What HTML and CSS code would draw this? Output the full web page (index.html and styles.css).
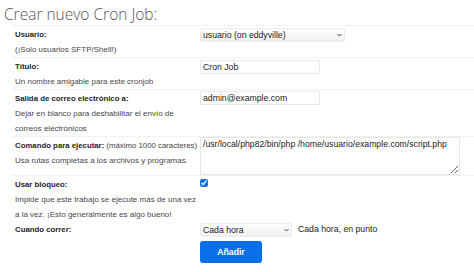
FILE: index.html
```html
<!DOCTYPE html>
<html lang="es">
<head>
<meta charset="utf-8">
<title>Crear nuevo Cron Job</title>
<link rel="stylesheet" href="styles.css">
</head>
<body>
<div class="page">
  <h1 class="title">Crear nuevo Cron Job:</h1>
  <form class="form">
    <div class="row">
      <div class="label-cell">
        <label class="lbl">Usuario:</label>
        <div class="desc">(¡Solo usuarios SFTP/Shell!)</div>
      </div>
      <div class="field">
        <span class="select-wrap select-wrap--user">
          <select class="select"><option>usuario (on eddyville)</option></select>
          <svg class="chev" viewBox="0 0 6 4" width="5" height="4"><path d="M0.6 0.8 L3 3.2 L5.4 0.8" fill="none" stroke="#333" stroke-width="1.1"/></svg>
        </span>
      </div>
    </div>
    <div class="row">
      <div class="label-cell">
        <label class="lbl">Título:</label>
        <div class="desc">Un nombre amigable para este cronjob</div>
      </div>
      <div class="field"><input class="text" type="text" value="Cron Job"></div>
    </div>
    <div class="row">
      <div class="label-cell">
        <label class="lbl">Salida de correo electrónico a:</label>
        <div class="desc">Dejar en blanco para deshabilitar el envío de correos electrónicos</div>
      </div>
      <div class="field"><input class="text text--mail" type="text" value="admin@example.com"></div>
    </div>
    <div class="row">
      <div class="label-cell">
        <label class="lbl">Comando para ejecutar:</label> <span class="note">(máximo 1000 caracteres)</span>
        <div class="desc">Usa rutas completas a los archivos y programas.</div>
      </div>
      <div class="field"><textarea class="area">/usr/local/php82/bin/php /home/usuario/example.com/script.php</textarea></div>
    </div>
    <div class="row">
      <div class="label-cell">
        <label class="lbl">Usar bloqueo:</label>
        <div class="desc">Impide que este trabajo se ejecute más de una vez a la vez. ¡Esto generalmente es algo bueno!</div>
      </div>
      <div class="field"><input class="check" type="checkbox" checked></div>
    </div>
    <div class="row row--tight">
      <div class="label-cell">
        <label class="lbl">Cuando correr:</label>
      </div>
      <div class="field field--inline">
        <span class="select-wrap select-wrap--when">
          <select class="select"><option>Cada hora</option></select>
          <svg class="chev" viewBox="0 0 6 4" width="5" height="4"><path d="M0.6 0.8 L3 3.2 L5.4 0.8" fill="none" stroke="#333" stroke-width="1.1"/></svg>
        </span>
        <span class="hint">Cada hora, en punto</span>
      </div>
    </div>
    <div class="row row--plain">
      <div class="label-cell"></div>
      <div class="field"><button class="btn" type="button">Añadir</button></div>
    </div>
  </form>
</div>
</body>
</html>
```
FILE: styles.css
```css
html, body {
  margin: 0;
  padding: 0;
  background: #ffffff;
}

body {
  font-family: "Liberation Sans", Arial, sans-serif;
  color: #222;
}

.page {
  width: 474px;
}

.title {
  margin: 0;
  padding: 4px 0 1px 4px;
  font-family: "Open Sans", sans-serif;
  font-weight: 300;
  font-size: 15.5px;
  line-height: 20px;
  color: #555;
}

.form {
  margin: 0;
}

.row {
  display: grid;
  grid-template-columns: 185px 1fr;
  margin-left: 12px;
  padding: 1px 0 0 3px;
  border-top: 1px solid #f1f1f1;
  line-height: 15px;
}

.row--tight {
  border-top: none;
  padding-top: 0;
}

.row--plain {
  border-top: none;
  padding-top: 3px;
}

.label-cell {
  font-size: 7.8px;
}

.lbl {
  font-weight: bold;
  color: #1e1e1e;
}

.note {
  color: #444;
}

.desc {
  color: #484848;
  font-size: 8px;
}

.field {
  font-size: 8.7px;
  padding-top: 1px;
}

.row--tight .field {
  padding-top: 0;
}

.field--inline {
  display: flex;
  align-items: center;
  gap: 6px;
  align-self: start;
}

.select-wrap {
  position: relative;
  display: inline-block;
  vertical-align: top;
}

.select-wrap--user {
  width: 145px;
}

.select-wrap--when {
  width: 92px;
}

.select {
  -webkit-appearance: none;
  appearance: none;
  display: block;
  width: 100%;
  height: 14px;
  margin: 0;
  padding: 0 0 0 2px;
  border: 1px solid #ececec;
  border-radius: 2px;
  background: linear-gradient(#ffffff, #f0f0f0);
  font-family: "Liberation Sans", Arial, sans-serif;
  font-size: 8.7px;
  line-height: 12px;
  color: #222;
}

.chev {
  position: absolute;
  right: 3px;
  top: 5px;
}

.text {
  display: block;
  box-sizing: border-box;
  width: 120px;
  height: 14px;
  margin: 0;
  padding: 0 2px;
  border: 1px solid #e9e9e9;
  border-radius: 1px;
  background: #fff;
  font-family: "Liberation Sans", Arial, sans-serif;
  font-size: 8.7px;
  color: #222;
  outline: none;
}

.text--mail {
  margin-top: -1px;
}

.area {
  display: block;
  box-sizing: border-box;
  width: 260px;
  height: 38px;
  margin: -2px 0 0 0;
  padding: 1px 2px;
  border: 1px solid #e6e6e6;
  border-radius: 1px;
  font-family: "Liberation Sans", Arial, sans-serif;
  font-size: 8.7px;
  line-height: 11px;
  color: #222;
  resize: both;
  outline: none;
}

.check {
  display: block;
  width: 8px;
  height: 8px;
  margin: 1px 0 0 0;
  accent-color: #1b6fe0;
}

.hint {
  color: #222;
  font-size: 8.7px;
}

.btn {
  display: block;
  width: 62px;
  height: 22px;
  margin: 0;
  padding: 0;
  border: none;
  border-radius: 3px;
  background: #0b6fe7;
  color: #fff;
  font-family: "Liberation Sans", Arial, sans-serif;
  font-weight: bold;
  font-size: 8.7px;
}
```
